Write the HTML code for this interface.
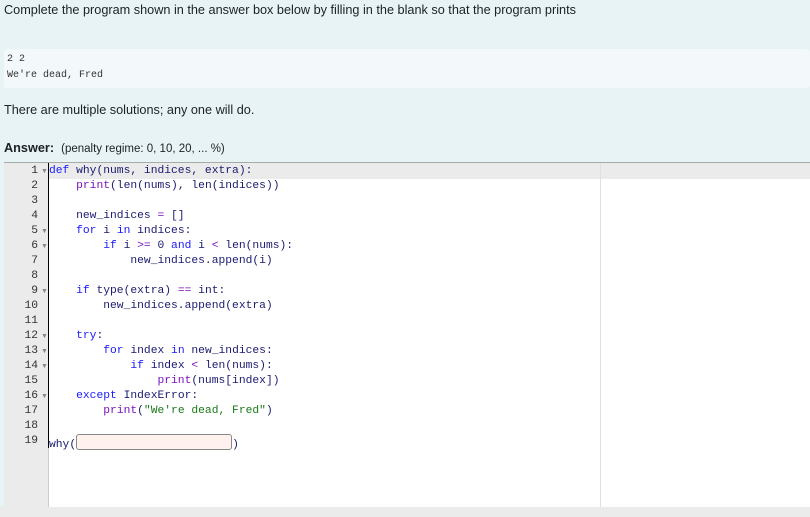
<!DOCTYPE html>
<html><head><style>
body{margin:0;width:810px;height:517px;background:#e7f3f5;font-family:"Liberation Sans",sans-serif;overflow:hidden;position:relative;color:#1d2125}
.t{position:absolute;left:4px;font-size:12.7px;white-space:nowrap}
.out{position:absolute;left:4px;top:49px;width:806px;height:39px;background:#f3f8fa;border-radius:3px;font-family:"Liberation Mono",monospace;font-size:10px;color:#333}
.ed{position:absolute;left:4px;top:162px;width:806px;height:345px;background:#fff;border-top:1px solid #a8aaa8}
.gut{position:absolute;left:0;top:0;width:44px;height:345px;background:#ebebeb;border-right:1px solid #ccc}
.active{position:absolute;left:0;top:0;width:806px;height:16px;background:#ebebeb}
.pm{position:absolute;left:596px;top:0;width:1px;height:345px;background:#e0e0e0}
.ln{position:absolute;left:0;top:1px;width:34px;text-align:right;font-family:"Liberation Mono",monospace;font-size:11.3px;color:#333;line-height:15px}
.f{position:absolute;left:37px;font-size:7px;color:#888;line-height:15px}
.code{position:absolute;left:45px;top:1px;font-family:"Liberation Mono",monospace;font-size:11.3px;line-height:15px;white-space:pre;color:#1a1a6e}
.k{color:#1a1aff}.p{color:#7a10c0}.s{color:#1a7a1a}.o{color:#7a10c0}
.bot{position:absolute;left:0;top:507px;width:810px;height:10px;background:#ebebeb}
</style></head><body>
<div class="t" style="top:3px">Complete the program shown in the answer box below by filling in the blank so that the program prints</div>
<div class="out"><div style="position:absolute;left:3px;top:5px">2 2</div><div style="position:absolute;left:3px;top:21px">We're dead, Fred</div></div>
<div class="t" style="top:103px">There are multiple solutions; any one will do.</div>
<div class="t" style="top:141px"><b>Answer:</b>&nbsp; <span style="font-size:11.5px">(penalty regime: 0, 10, 20, ... %)</span></div>
<div class="ed">
<div class="active"></div>
<div class="gut"></div>
<div class="pm"></div>
<div style="position:absolute;left:44px;top:0;width:1px;height:285px;background:#000"></div>
<div class="ln">1<br>2<br>3<br>4<br>5<br>6<br>7<br>8<br>9<br>10<br>11<br>12<br>13<br>14<br>15<br>16<br>17<br>18<br>19</div>
<div class="f" style="top:1px">▼</div><div class="f" style="top:61px">▼</div><div class="f" style="top:76px">▼</div><div class="f" style="top:121px">▼</div><div class="f" style="top:166px">▼</div><div class="f" style="top:181px">▼</div><div class="f" style="top:196px">▼</div><div class="f" style="top:226px">▼</div>
<div class="code"><span class="k">def</span> why(nums, indices, extra):
    <span class="p">print</span>(len(nums), len(indices))

    new_indices <span class="o">=</span> []
    <span class="k">for</span> i <span class="k">in</span> indices:
        <span class="k">if</span> i <span class="o">&gt;=</span> 0 <span class="k">and</span> i <span class="o">&lt;</span> len(nums):
            new_indices.append(i)

    <span class="k">if</span> type(extra) <span class="o">==</span> int:
        new_indices.append(extra)

    <span class="k">try</span>:
        <span class="k">for</span> index <span class="k">in</span> new_indices:
            <span class="k">if</span> index <span class="o">&lt;</span> len(nums):
                <span class="p">print</span>(nums[index])
    <span class="k">except</span> IndexError:
        <span class="p">print</span>(<span class="s">"We're dead, Fred"</span>)

why(<span style="display:inline-block;width:154px;height:14px;vertical-align:-3px;background:#fff2ee;border:1px solid #888;border-radius:3px"></span>)</div>
</div>
<div class="bot"></div>
</body></html>
